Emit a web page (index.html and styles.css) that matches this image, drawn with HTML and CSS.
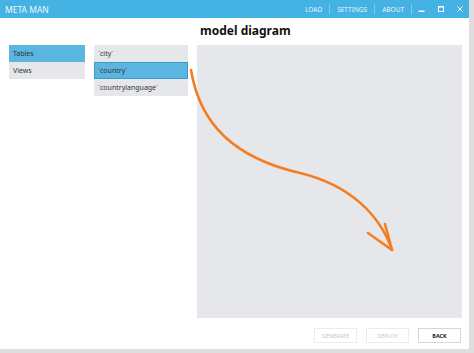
FILE: index.html
```html
<!DOCTYPE html>
<html lang="en">
<head>
  <meta charset="UTF-8">
  <title>Meta Man</title>
  <link rel="stylesheet" href="styles.css">
</head>
<body>
  <div class="window">
    <div class="titlebar">
      <span class="app-name">META MAN</span>
      <div class="menu">
        <span class="menu-item">LOAD</span>
        <span class="sep"></span>
        <span class="menu-item">SETTINGS</span>
        <span class="sep"></span>
        <span class="menu-item">ABOUT</span>
        <span class="sep"></span>
        <span class="win-btn">
          <svg width="8" height="8" viewBox="0 0 8 8"><rect x="0.5" y="5.5" width="6" height="1.5" fill="#fff"/></svg>
        </span>
        <span class="win-btn">
          <svg width="8" height="8" viewBox="0 0 8 8"><rect x="1.5" y="1.5" width="5" height="5" fill="none" stroke="#fff" stroke-width="1"/><rect x="1" y="1" width="6" height="1.5" fill="#fff"/></svg>
        </span>
        <span class="win-btn">
          <svg width="8" height="8" viewBox="0 0 8 8"><path d="M1.5 1.5L6.5 6.5M6.5 1.5L1.5 6.5" stroke="#fff" stroke-width="1"/></svg>
        </span>
      </div>
    </div>

    <div class="main">
      <div class="content">
        <div class="nav">
          <div class="nav-item active">Tables</div>
          <div class="nav-item">Views</div>
        </div>
        <div class="tables">
          <div class="table-item">`city`</div>
          <div class="table-item selected">`country`</div>
          <div class="table-item">`countrylanguage`</div>
        </div>
        <div class="diagram">
          <h1>model diagram</h1>
          <div class="canvas"></div>
        </div>
      </div>
      <div class="footer">
        <button class="button" disabled>GENERATE</button>
        <button class="button" disabled>DEPLOY</button>
        <button class="button primary">BACK</button>
      </div>
    </div>

    <!-- hand drawn arrow over the page -->
    <svg class="arrow" width="469" height="349" viewBox="0 0 469 349">
      <path d="M191 70 C200 125, 235 158, 300 173 C350 185, 380 215, 392 250" fill="none" stroke="#f47d22" stroke-width="2.6" stroke-linecap="round"/>
      <path d="M368 233 L392 250 L385 224" fill="none" stroke="#f47d22" stroke-width="2.6" stroke-linecap="round" stroke-linejoin="round"/>
    </svg>
  </div>
</body>
</html>
```

FILE: styles.css
```css
body {
  margin: 0;
  background-color: #dedede;
  font-family: "Noto Sans", "Open Sans", sans-serif;
  color: #333;
}
.window {
  position: relative;
  width: 469px;
  height: 349px;
  background-color: #fff;
  display: flex;
  flex-direction: column;
}
.titlebar {
  flex-shrink: 0;
  height: 18px;
  background-color: #44b2e3;
  color: #fff;
  display: flex;
  align-items: center;
  justify-content: space-between;
  padding: 0 0 0 5px;
}
.app-name {
  font-size: 8.5px;
  color: #eef8fd;
}
.menu {
  display: flex;
  align-items: center;
  height: 100%;
  font-size: 6.5px;
}
.menu-item {
  padding: 0 7px;
  color: #e8f6fd;
}
.sep {
  width: 1px;
  height: 10px;
  background-color: #7fcbee;
}
.win-btn {
  width: 19px;
  display: flex;
  justify-content: center;
  align-items: center;
}
.win-btn svg {
  display: block;
}
.main {
  flex: 1;
  display: flex;
  flex-direction: column;
  padding: 0 7px 0 9px;
}
.content {
  display: flex;
  gap: 9px;
  padding-top: 27px;
}
.nav {
  width: 76px;
}
.nav-item {
  height: 17px;
  line-height: 17px;
  padding-left: 4px;
  font-size: 7px;
  background-color: #e6e7ea;
  color: #333;
}
.nav-item.active {
  background-color: #5ab5e1;
}
.tables {
  width: 94px;
}
.table-item {
  height: 17px;
  line-height: 17px;
  padding-left: 4px;
  font-size: 7px;
  background-color: #e6e7ea;
  box-sizing: border-box;
}
.table-item.selected {
  background-color: #5ab5e1;
  border: 1px solid #3b9ccc;
  line-height: 15px;
  padding-left: 3px;
}
.diagram {
  position: relative;
  width: 265px;
}
.diagram h1 {
  position: absolute;
  top: -23px;
  left: 3px;
  margin: 0;
  font-size: 12px;
  font-weight: bold;
  color: #111;
}
.canvas {
  height: 273px;
  background-color: #e6e7eb;
}
.footer {
  display: flex;
  justify-content: flex-end;
  gap: 9px;
  margin-top: 10px;
  padding-right: 1px;
}
.button {
  width: 43px;
  height: 15px;
  padding: 0;
  font-family: "Noto Sans", sans-serif;
  font-size: 5.5px;
  background-color: #fff;
  border: 1px solid #ececec;
  color: #c4c4c4;
}
.button.primary {
  border-color: #d6d6d6;
  color: #222;
  font-weight: bold;
}
.arrow {
  position: absolute;
  left: 0;
  top: 0;
  pointer-events: none;
}
```
